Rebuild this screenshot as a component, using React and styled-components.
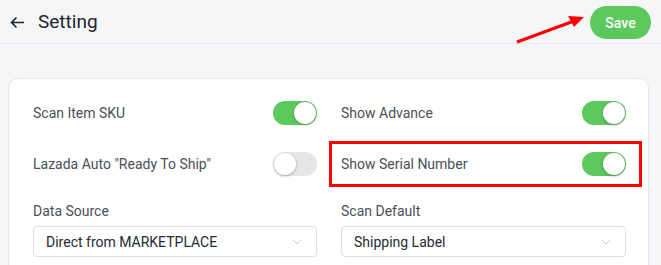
import React, { useState } from 'react';
import styled, { createGlobalStyle } from 'styled-components';

const GlobalStyle = createGlobalStyle`
  body {
    margin: 0;
    background: #f5f6f8;
    font-family: Roboto, "Liberation Sans", sans-serif;
  }
`;

const Page = styled.div`
  position: relative;
  width: 661px;
  height: 265px;
  overflow: hidden;
`;

const Header = styled.header`
  height: 44px;
  box-sizing: border-box;
  display: flex;
  align-items: center;
  padding: 0 10px 0 10px;
  border-bottom: 1px solid #e4e6ea;
`;

const BackButton = styled.button`
  border: 0;
  background: none;
  padding: 0;
  margin-top: 1px;
  display: flex;
  align-items: center;
  color: #1f2430;
  cursor: pointer;
`;

const Title = styled.h1`
  margin: 0 0 0 13px;
  font-size: 19px;
  font-weight: 400;
  color: #1f2430;
  flex: 1;
`;

const SaveButton = styled.button`
  width: 61px;
  height: 33px;
  margin-top: 2px;
  border: 0;
  border-radius: 17px;
  background: #5cc95c;
  color: #fff;
  font-family: Roboto, "Liberation Sans", sans-serif;
  font-size: 14px;
  font-weight: 500;
  cursor: pointer;
`;

const Pointer = styled.svg`
  position: absolute;
  left: 512px;
  top: 10px;
`;

const Main = styled.main`
  padding: 34px 12px 0 8px;
`;

const Card = styled.section`
  background: #fff;
  border: 1px solid #e4e6ea;
  border-radius: 10px;
  padding: 11px 24px 20px 24px;
  display: grid;
  grid-template-columns: 284px 285px;
  column-gap: 24px;
`;

const Row = styled.div`
  position: relative;
  height: 46px;
  margin-bottom: 5px;
  display: flex;
  align-items: center;
  justify-content: space-between;

  ${(p) =>
    p.$marked &&
    `
    &::after {
      content: '';
      position: absolute;
      left: -12px;
      right: -16px;
      top: 0;
      bottom: 0;
      border: 3px solid #ff0000;
      pointer-events: none;
    }
  `}
`;

const Label = styled.span`
  font-size: 14px;
  color: #4a4f58;
`;

const Track = styled.button`
  position: relative;
  width: 44px;
  height: 24px;
  padding: 0;
  border: 0;
  border-radius: 12px;
  background: ${(p) => (p.$on ? '#5cc95c' : '#e6e6e6')};
  cursor: pointer;
`;

const Knob = styled.span`
  position: absolute;
  top: 1px;
  left: ${(p) => (p.$on ? '21px' : '1px')};
  width: 22px;
  height: 22px;
  border-radius: 50%;
  background: #fff;
  box-shadow: 0 1px 3px rgba(0, 0, 0, 0.28);
`;

const Field = styled.div`
  padding-top: 9px;
`;

const FieldLabel = styled.div`
  font-size: 14px;
  line-height: 20px;
  color: #4a4f58;
  margin-bottom: 5px;
`;

const Select = styled.div`
  height: 31px;
  box-sizing: border-box;
  border: 1px solid #dcdfe4;
  border-radius: 4px;
  padding: 0 14px 0 12px;
  display: flex;
  align-items: center;
  justify-content: space-between;
  font-size: 14px;
  color: #262a33;
`;

const Toggle = ({ on, onChange }) => (
  <Track $on={on} onClick={onChange}>
    <Knob $on={on} />
  </Track>
);

const Chevron = () => (
  <svg width="10" height="6" viewBox="0 0 10 6" fill="none">
    <path d="M1 1l4 4 4-4" stroke="#c6cad1" strokeWidth="1" />
  </svg>
);

export default function App() {
  const [opts, setOpts] = useState({
    sku: true,
    advance: true,
    lazada: false,
    serial: true,
  });
  const flip = (k) => () => setOpts({ ...opts, [k]: !opts[k] });

  return (
    <Page>
      <GlobalStyle />
      <Header>
        <BackButton>
          <svg width="15" height="13" viewBox="0 0 15 13" fill="none">
            <path d="M14 6.5H1.5M6.5 1.5l-5 5 5 5" stroke="currentColor" strokeWidth="1.6" />
          </svg>
        </BackButton>
        <Title>Setting</Title>
        <SaveButton>Save</SaveButton>
      </Header>
      <Pointer width="80" height="40" viewBox="0 0 80 40">
        <line x1="5" y1="32" x2="62" y2="11" stroke="#ff0000" strokeWidth="3" />
        <polygon points="72,7 56,6 62,17" fill="#ff0000" />
      </Pointer>
      <Main>
        <Card>
          <Row>
            <Label>Scan Item SKU</Label>
            <Toggle on={opts.sku} onChange={flip('sku')} />
          </Row>
          <Row>
            <Label>Show Advance</Label>
            <Toggle on={opts.advance} onChange={flip('advance')} />
          </Row>
          <Row>
            <Label>Lazada Auto "Ready To Ship"</Label>
            <Toggle on={opts.lazada} onChange={flip('lazada')} />
          </Row>
          <Row $marked>
            <Label>Show Serial Number</Label>
            <Toggle on={opts.serial} onChange={flip('serial')} />
          </Row>
          <Field>
            <FieldLabel>Data Source</FieldLabel>
            <Select>
              <span>Direct from MARKETPLACE</span>
              <Chevron />
            </Select>
          </Field>
          <Field>
            <FieldLabel>Scan Default</FieldLabel>
            <Select>
              <span>Shipping Label</span>
              <Chevron />
            </Select>
          </Field>
        </Card>
      </Main>
    </Page>
  );
}
